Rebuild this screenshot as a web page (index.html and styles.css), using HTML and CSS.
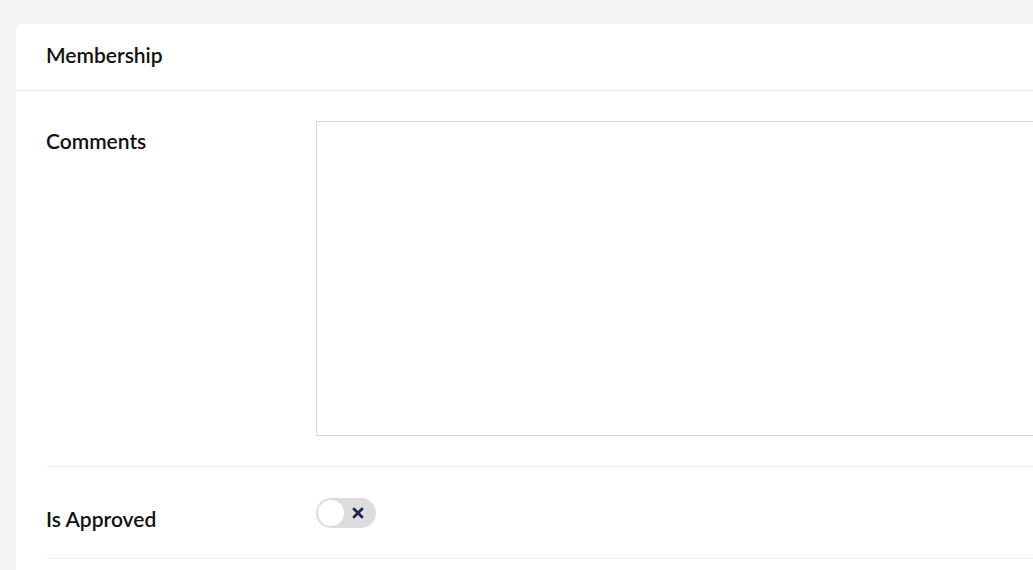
FILE: index.html
```html
<!DOCTYPE html>
<html lang="en">
<head>
<meta charset="utf-8">
<title>Membership</title>
<link rel="stylesheet" href="styles.css">
</head>
<body>
<div class="page">
  <section class="card">
    <header class="card-header">
      <h2 class="card-title">Membership</h2>
    </header>
    <div class="card-body">
      <div class="property">
        <label class="prop-label" for="comments">Comments</label>
        <div class="prop-editor">
          <textarea id="comments" class="textarea"></textarea>
        </div>
      </div>
      <div class="property property-toggle">
        <label class="prop-label">Is Approved</label>
        <div class="prop-editor">
          <span class="toggle">
            <span class="knob"></span>
            <svg class="toggle-x" width="12" height="12" viewBox="0 0 12 12">
              <path d="M2 2 L10 10 M10 2 L2 10" stroke="#1b264f" stroke-width="2.7" stroke-linecap="round" fill="none"/>
            </svg>
          </span>
        </div>
      </div>
    </div>
  </section>
</div>
</body>
</html>
```
FILE: styles.css
```css
html, body {
  margin: 0;
  padding: 0;
}
body {
  background: #f4f2f2;
  font-family: Lato, "Open Sans", sans-serif;
  color: #1b1b1b;
  overflow: hidden;
  height: 570px;
}
.page {
  padding: 24px 0 0 16px;
}
.card {
  width: 1200px;
  min-height: 546px;
  background: #ffffff;
  border-radius: 6px 0 0 0;
}
.card-header {
  height: 67px;
  box-sizing: border-box;
  padding: 0 30px 4px;
  display: flex;
  align-items: center;
  border-bottom: 1px solid #e9e9eb;
}
.card-title {
  margin: 0;
  font-size: 21px;
  font-weight: 600;
  line-height: 24px;
  color: #111;
}
.card-body {
  padding: 30px 0 0 30px;
}
.property {
  display: grid;
  grid-template-columns: 270px 1fr;
  align-items: start;
  padding-bottom: 30px;
  border-bottom: 1px solid #f0f0f0;
}
.property-toggle {
  padding-top: 31px;
}
.prop-label {
  font-size: 21px;
  font-weight: 600;
  line-height: 18px;
  padding-top: 11px;
  color: #111;
}
.property-toggle .prop-label {
  padding-top: 12px;
}
.textarea {
  display: block;
  width: 100%;
  height: 315px;
  box-sizing: border-box;
  border: 1px solid #d8d7d9;
  border-radius: 0;
  margin: 0;
  padding: 8px;
  resize: none;
  font-family: inherit;
  background: #fff;
}
.toggle {
  position: relative;
  display: flex;
  align-items: center;
  width: 60px;
  height: 30px;
  border-radius: 15px;
  background: #dddde0;
}
.knob {
  position: absolute;
  left: 2px;
  top: 2px;
  width: 26px;
  height: 26px;
  border-radius: 50%;
  background: #ffffff;
}
.toggle-x {
  position: absolute;
  left: 36px;
  top: 9px;
}
```
